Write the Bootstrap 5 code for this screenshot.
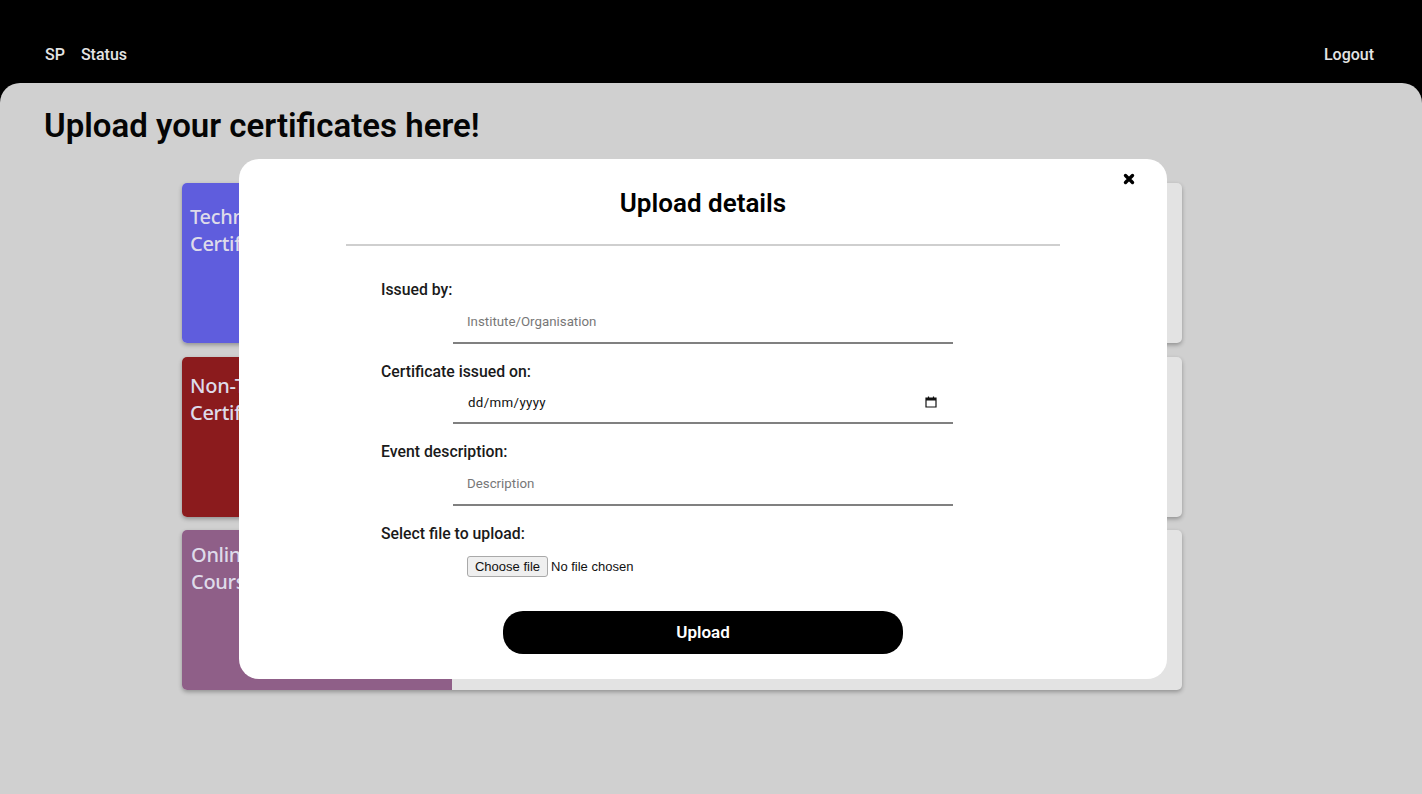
<!DOCTYPE html>
<html lang="en-GB">
<head>
  <meta charset="UTF-8">
  <meta name="viewport" content="width=device-width, initial-scale=1.0">
  <title>Upload certificates</title>
  <link href="https://cdn.jsdelivr.net/npm/bootstrap@5.3.3/dist/css/bootstrap.min.css" rel="stylesheet">
  <style>
    html, body { height: 100%; }
    body { background: #000; font-family: Roboto, "Liberation Sans", sans-serif; overflow: hidden; }
    .top-bar { height: 83px; padding: 43px 48px 0 45px; }
    .top-bar a { color: #e4e4e4; font-size: 16px; font-weight: 500; line-height: 24px; text-decoration: none; }
    .top-links { gap: 16px; }
    .page-area { height: 711px; background: #d0d0d0; border-radius: 20px 20px 0 0; padding: 22px 44px 0; }
    .page-title { font-size: 33px; font-weight: 600; line-height: 42px; margin: 0 0 36px; color: #050505; }
    .cert-list { width: 1000px; margin-left: 138px; gap: 13.5px; }
    .cert-row { height: 160px; background: #e3e3e3; border: 0; border-radius: 5px; box-shadow: 0 2px 4px rgba(0,0,0,.3); overflow: hidden; }
    .cert-side { width: 270px; padding: 20px 8px; color: #dedbea; font-family: "Noto Sans", sans-serif; font-size: 20px; font-weight: 500; line-height: 27px; letter-spacing: -.3px; }
    .side-tech { background: #5f5ddd; }
    .side-non { background: #8b1b1d; padding-top: 15px; }
    .side-online { background: #8f5f88; padding: 11px 9px; }
    .upload-box { position: fixed; left: 239px; top: 159px; width: 928px; height: 520px; background: #fff; border-radius: 20px; }
    .close-x { position: absolute; right: 32px; top: 14px; line-height: 0; background: none; border: 0; padding: 0; }
    .upload-title { font-size: 26px; font-weight: 600; line-height: 34px; text-align: center; margin: 0; padding-top: 27px; color: #000; }
    .upload-rule { width: 714px; margin: 24px auto 0; border: 0; border-top: 2px solid #cfcfcf; opacity: 1; }
    .upload-form { width: 714px; margin: 31px auto 0; }
    .field-label { display: block; height: 24px; margin: 0 0 0 35px; font-size: 15.8px; font-weight: 500; line-height: 26px; color: #1a1a1a; }
    .line-input { display: block; width: 500px; height: 43px; margin: 0 0 15px 107px; padding: 0 14px; border: 0; border-bottom: 2px solid #808080; border-radius: 0; font-size: 13.3px; color: #111; outline: 0; box-shadow: none; }
    .line-input:focus { border-color: #808080; box-shadow: none; }
    .line-input::placeholder { color: #777; }
    .date-wrap { position: relative; }
    .date-input { height: 41px; padding-left: 15px; letter-spacing: .35px; }
    .date-icon { position: absolute; right: 123px; top: 13px; line-height: 0; }
    .file-row { margin: 11px 0 0 121px; height: 21px; gap: 3px; font-family: "Liberation Sans", sans-serif; font-size: 13px; color: #111; }
    .file-btn { height: 21px; width: 81px; padding: 0; background: #efefef; border: 1px solid #a9a9a9; border-radius: 3px; font-size: 13px; line-height: 19px; color: #111; }
    .upload-btn { display: block; width: 400px; height: 43px; margin: 34px auto 0; background: #000; color: #fff; border: 0; border-radius: 20px; font-size: 17px; font-weight: 600; }
  </style>
</head>
<body>
  <nav class="top-bar d-flex justify-content-between align-items-start">
    <div class="top-links d-flex">
      <a href="#">SP</a>
      <a href="#">Status</a>
    </div>
    <a href="#">Logout</a>
  </nav>

  <main class="page-area">
    <h1 class="page-title">Upload your certificates here!</h1>
    <div class="cert-list d-flex flex-column">
      <div class="card cert-row flex-row">
        <div class="cert-side side-tech">Technical<br>Certificates</div>
      </div>
      <div class="card cert-row flex-row">
        <div class="cert-side side-non">Non-Technical<br>Certificates</div>
      </div>
      <div class="card cert-row flex-row">
        <div class="cert-side side-online">Online<br>Courses</div>
      </div>
    </div>
  </main>

  <div class="upload-box">
    <button class="close-x" type="button" aria-label="Close">
      <svg width="12" height="12" viewBox="0 0 12 12"><path d="M2.5 2.500L9.500 9.500M9.500 2.500L2.500 9.500" stroke="#000" stroke-width="3.4" stroke-linecap="round"/></svg>
    </button>
    <h2 class="upload-title">Upload details</h2>
    <hr class="upload-rule">
    <form class="upload-form">
      <label class="field-label" for="issuer">Issued by:</label>
      <input class="form-control line-input" id="issuer" type="text" placeholder="Institute/Organisation">
      <label class="field-label" for="issued-on">Certificate issued on:</label>
      <div class="date-wrap">
        <input class="form-control line-input date-input" id="issued-on" type="text" value="dd/mm/yyyy">
        <span class="date-icon">
          <svg width="12" height="12" viewBox="0 0 12 12"><path d="M1 2h10v9H1z" fill="none" stroke="#111" stroke-width="1.200"/><path d="M1 2h10v2.500H1z" fill="#111"/><path d="M3.500 .5v2M8.500 .5v2" stroke="#111" stroke-width="1.200"/></svg>
        </span>
      </div>
      <label class="field-label" for="desc">Event description:</label>
      <input class="form-control line-input" id="desc" type="text" placeholder="Description">
      <label class="field-label">Select file to upload:</label>
      <div class="file-row d-flex align-items-center">
        <button class="file-btn" type="button">Choose file</button>
        <span>No file chosen</span>
      </div>
      <button class="upload-btn" type="button">Upload</button>
    </form>
  </div>

  <script src="https://cdn.jsdelivr.net/npm/bootstrap@5.3.3/dist/js/bootstrap.bundle.min.js"></script>
</body>
</html>
